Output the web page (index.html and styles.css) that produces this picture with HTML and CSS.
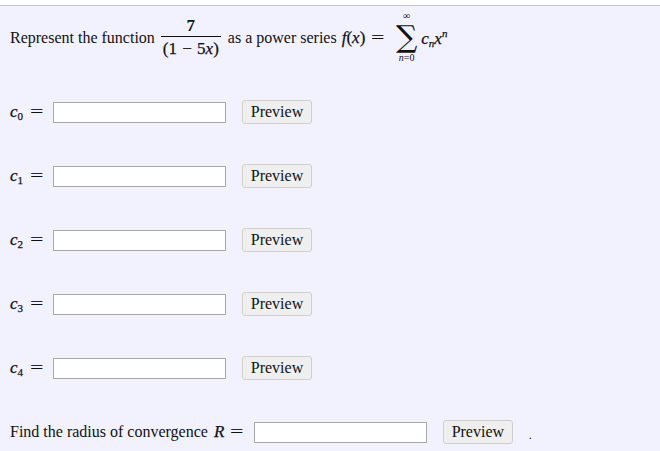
FILE: index.html
```html
<!DOCTYPE html>
<html>
<head>
<meta charset="utf-8">
<link rel="stylesheet" href="styles.css">
</head>
<body>
<div class="top-strip"></div>
<main class="problem">
  <div class="row intro">
    <span class="txt">Represent the function</span>
    <span class="frac mj">
      <span class="num">7</span>
      <span class="den">(1 <span class="op">&minus;</span> 5<i>x</i>)</span>
    </span>
    <span class="txt">as a power series</span>
    <span class="mj fx"><i>f</i>(<i>x</i>)<span class="eq">=</span></span>
    <span class="sum mj">
      <span class="lim">&infin;</span>
      <span class="sigma">&sum;</span>
      <span class="lim low"><i>n</i>=0</span>
    </span>
    <span class="mj term"><i>c</i><sub><i>n</i></sub><i>x</i><sup><i>n</i></sup></span>
  </div>

  <div class="row coef">
    <span class="label mj"><i>c</i><sub>0</sub><span class="eq">=</span></span>
    <input class="answer" type="text">
    <button class="preview">Preview</button>
  </div>
  <div class="row coef">
    <span class="label mj"><i>c</i><sub>1</sub><span class="eq">=</span></span>
    <input class="answer" type="text">
    <button class="preview">Preview</button>
  </div>
  <div class="row coef">
    <span class="label mj"><i>c</i><sub>2</sub><span class="eq">=</span></span>
    <input class="answer" type="text">
    <button class="preview">Preview</button>
  </div>
  <div class="row coef">
    <span class="label mj"><i>c</i><sub>3</sub><span class="eq">=</span></span>
    <input class="answer" type="text">
    <button class="preview">Preview</button>
  </div>
  <div class="row coef">
    <span class="label mj"><i>c</i><sub>4</sub><span class="eq">=</span></span>
    <input class="answer" type="text">
    <button class="preview">Preview</button>
  </div>

  <div class="row radius">
    <span class="txt">Find the radius of convergence</span>
    <span class="mj rvar"><i>R</i><span class="eq">=</span></span>
    <input class="answer" type="text">
    <button class="preview">Preview</button>
    <span class="dot">.</span>
  </div>
</main>
</body>
</html>
```

FILE: styles.css
```css
html, body {
  margin: 0;
  padding: 0;
  background: #ffffff;
}

body {
  font-family: "Liberation Serif", "Times New Roman", serif;
  font-size: 16px;
  color: #111;
  width: 660px;
  height: 451px;
  overflow: hidden;
}

.top-strip {
  height: 5px;
  background: #ffffff;
}

.problem {
  border-top: 1px solid #c3c3cc;
  background: #f2f2fe;
  height: 445px;
  padding-left: 10px;
}

.row {
  display: flex;
  align-items: center;
  height: 64px;
}

.intro {
  margin-bottom: 10px;
}

.mj {
  font-family: "Liberation Serif", "Times New Roman", serif;
  font-size: 17px;
  color: #111;
  white-space: nowrap;
  -webkit-text-stroke: 0.25px #111;
}

.mj i {
  font-style: italic;
}

.eq {
  display: inline-block;
  font-style: normal;
  margin: 0 6px 0 8px;
  transform: scaleX(1.35);
}

.op {
  margin: 0 1px;
}

.frac {
  display: inline-flex;
  flex-direction: column;
  align-items: center;
  margin: 0 7px 0 6px;
  position: relative;
  top: -1px;
}

.frac .num {
  line-height: 18px;
  font-weight: bold;
  padding-bottom: 1px;
  -webkit-text-stroke: 0;
}

.frac .den {
  border-top: 1px solid #111;
  padding: 2px 2px 0;
  line-height: 19px;
}

.fx {
  margin-left: 5px;
}

.sum {
  display: inline-flex;
  flex-direction: column;
  align-items: center;
  margin: 0 4px 0 7px;
  -webkit-text-stroke: 0;
  position: relative;
  top: -1px;
}

.sum .lim {
  font-size: 10px;
  line-height: 10px;
}

.sum .sigma {
  font-family: "DejaVu Serif", serif;
  font-size: 30px;
  line-height: 22px;
  margin: 5px 0 5px;
  -webkit-text-stroke: 0;
}

.sum .low i {
  font-style: italic;
}

.term sub,
.term sup {
  font-size: 11px;
}

.term sub {
  vertical-align: -3px;
}

.term sup {
  vertical-align: 7px;
}

.label {
  width: 43px;
  flex: none;
}

.label sub {
  font-size: 11px;
  vertical-align: -3px;
}

.label .eq {
  margin-left: 9px;
}

.answer {
  width: 173px;
  height: 21px;
  box-sizing: border-box;
  border: 1px solid #a8a8a8;
  background: #fff;
  margin: 0 16px 0 0;
  padding: 0;
}

.preview {
  width: 70px;
  height: 24px;
  box-sizing: border-box;
  background: #efefef;
  border: 1px solid #cfcfcf;
  border-radius: 3px;
  font-family: "Liberation Serif", "Times New Roman", serif;
  font-size: 16px;
  color: #111;
  padding: 0;
}

.rvar {
  margin-left: 6px;
  margin-right: 6px;
}

.dot {
  margin-left: 16px;
  font-size: 12px;
  position: relative;
  top: 3px;
}
```
